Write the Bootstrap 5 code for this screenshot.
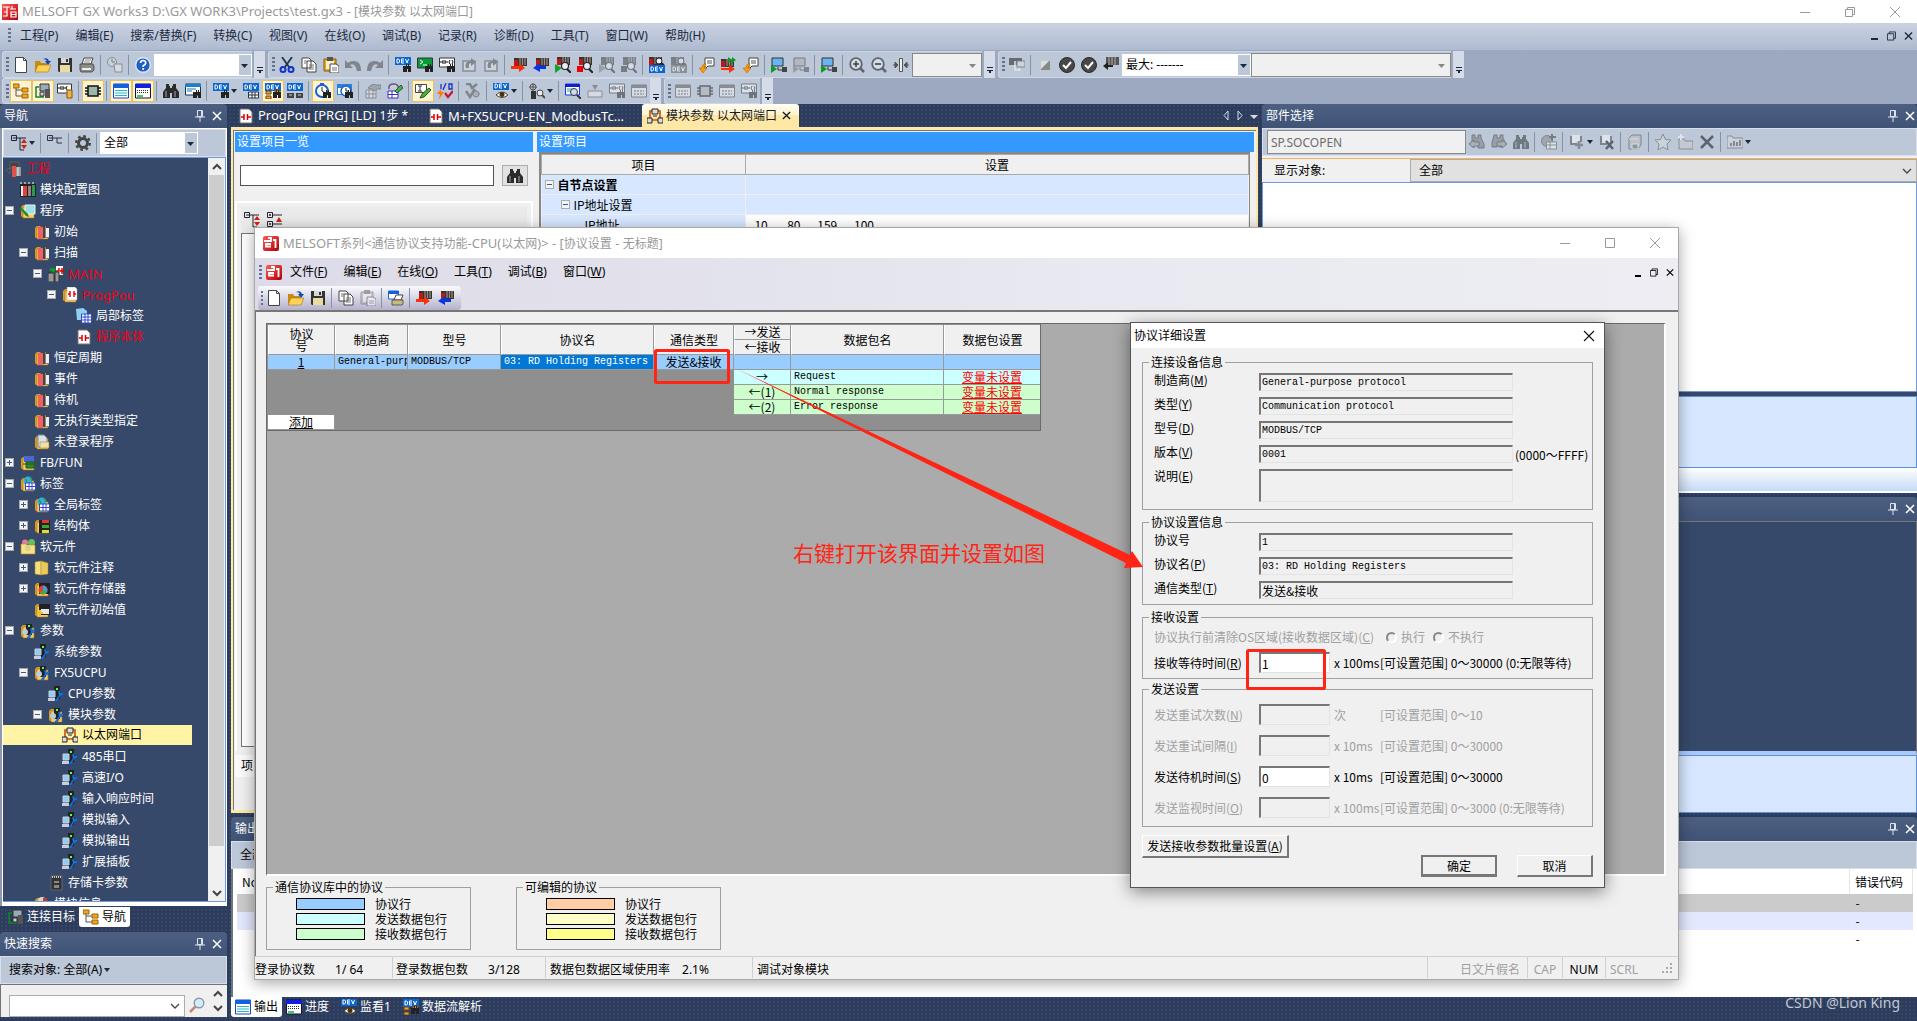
<!DOCTYPE html>
<html lang="zh-CN">
<head>
<meta charset="utf-8">
<meta name="viewport" content="width=device-width, initial-scale=1">
<title>MELSOFT GX Works3</title>
<link href="https://cdn.jsdelivr.net/npm/bootstrap@5.3.0/dist/css/bootstrap.min.css" rel="stylesheet">
<style>
:root{--ui:"Noto Sans","Noto Sans CJK SC",sans-serif;--sim:"Noto Sans CJK SC",sans-serif;--navy:#2c3c5a;--bar:#bcc7d8;--field:#36496a}
html,body{height:100%}
body{font:12px/16px var(--ui);color:#000;overflow:hidden;background:var(--navy);position:relative}
button,input,select,textarea{font:inherit;color:inherit;border-radius:0}
button{background:none;border:0;padding:0}
svg{display:block;flex:none}
.ic{width:16px;height:16px}
.latin{font-size:13px}
.mono{font-family:"Liberation Mono",monospace;font-size:10px}
.app{height:100%}
.shrinky{min-height:0;min-width:0}
.titlebar{height:23px;background:#fff;color:#999;padding:0 17px 0 2px}
.titlebar .ctl{gap:35px}
.menubar{height:28px;background:linear-gradient(#cad3e2,#aebad0);color:#1b293e;padding:0 4px 2px 4px;border-bottom:1px solid #9ca9c0}
.menubar nav{gap:17px;padding-left:9px}
.menubar nav button,.fmenu nav button{white-space:nowrap}
.grip{width:3px;height:15px;background:repeating-linear-gradient(#5f7290 0 2px,transparent 2px 4px)}
.bars{background:#9ca9c0;height:53px}
.barrow{height:27px;gap:3px;padding-left:2px}
.tgroup{height:27px;background:var(--bar);border:1px solid #cfd6e5;border-right:0;border-radius:3px 0 0 3px;padding-left:3px}
.tgroup .grip{margin-right:1px}
.low .tgroup{height:26px}
.tb{width:22px;height:22px;display:flex;align-items:center;justify-content:center;flex:none;border:1px solid transparent}
.tb.drop{width:30px}
.tb.sel{background:#fff3d4;border-color:#e5c365}
.tb.dis svg{filter:grayscale(1);opacity:.5}
.caret{width:0;height:0;border:3px solid transparent;border-top:4px solid #1b293e;border-bottom:0;margin-left:2px;flex:none}
.vsep{width:1px;height:20px;background:#8591a5;margin:0 3px 0 2px;flex:none}
.ovf{width:11px;height:27px;background:#d5dce8;display:flex;align-items:flex-end;justify-content:center;padding-bottom:5px;margin-left:2px}
.ovf i{width:6px;height:6px;border-top:1px solid #1b293e;background:linear-gradient(#1b293e,#1b293e) 2px 3px/2px 2px no-repeat,linear-gradient(#1b293e,#1b293e) 0 2px/6px 1px no-repeat}
.sel-box{appearance:none;height:22px;border:1px solid #fff;outline:0;padding:0 18px 0 3px;background:#fff url("data:image/svg+xml,%3Csvg xmlns='http://www.w3.org/2000/svg' width='12' height='20'%3E%3Cpath fill='%23bcc7d8' d='M0 0h12v20H0z'/%3E%3Cpath fill='%231b293e' d='M2 9h7l-3.500 4z'/%3E%3C/svg%3E") right 0 center no-repeat}
.sel-off{appearance:none;height:24px;border:1px solid #8a8a8a;outline:0;background:#f0f0f0 url("data:image/svg+xml,%3Csvg xmlns='http://www.w3.org/2000/svg' width='12' height='20'%3E%3Cpath fill='%23888' d='M1 9h7l-3.500 4z'/%3E%3C/svg%3E") right 1px center no-repeat}
.txt-off{height:24px;width:199px;border:1px solid #8a8a8a;outline:0;background:#f0f0f0;color:#6d6d6d;padding:0 3px}
.sel-flat{appearance:none;border:1px solid #adadad;outline:0;background:#e1e1e1 url("data:image/svg+xml,%3Csvg xmlns='http://www.w3.org/2000/svg' width='12' height='10'%3E%3Cpath fill='none' stroke='%23444' stroke-width='1.300' d='M2 3l4 4 4-4'/%3E%3C/svg%3E") right 3px center no-repeat}
.w98{width:98px}.w70{width:70px}.w130{width:129px}.w200{width:200px}
.dots{background:radial-gradient(#35476a 1px,transparent 1px) 0 0/4px 4px,var(--navy)}
.dock{gap:4px}
.leftcol{width:227px}
.rightcol{width:655px}
.phead{height:24px;background:linear-gradient(#4d6082,#3f5377);color:#fff;padding:0 5px 0 4px;border-radius:4px 4px 0 0;flex:none}
.phead.far{padding-right:2px}
.phead .tools{gap:7px}
.pbar{background:var(--bar);border:1px solid #d9dfea;height:28px;flex:none}
.nav-box{background:#fff;border-left:2px solid #8e99ad;padding:1px 1px 4px}
.tree{background:var(--field);color:#fff;border:1px solid #6f9bd4;border-right:0;border-left:0;min-height:0;overflow:hidden}
.tree li{height:21px;white-space:nowrap;padding-left:calc((var(--lv) - 1)*14px + 2px)}
.tree li.root{padding-left:3px}
.tree li .ic{margin-right:4px}
.tree li .box{margin-right:6px}
.tree li.hot{background:#fff3a5;color:#000;margin-right:16px;height:20px;margin-bottom:1px}
.tree li.red{color:#f00014}
.box{width:9px;height:9px;flex:none;border:1px solid #aaa;background:linear-gradient(#3b5998,#3b5998) 1px 3px/5px 1px no-repeat #f4f4f4}
.box.plus{background:linear-gradient(#3b5998,#3b5998) 1px 3px/5px 1px no-repeat,linear-gradient(#3b5998,#3b5998) 3px 1px/1px 5px no-repeat #f4f4f4}
.box.none{visibility:hidden}
.sbar{width:18px;background:#f0f0f0;border:1px solid #6f9bd4;border-left:0}
.sbar .thumb{background:#cdcdcd;margin:0 1px;flex:674}
.sbar .rest{flex:38}
.sbar span{height:17px;display:flex;align-items:center;justify-content:center}
.btab{height:20px;padding:0 4px;color:#fff;gap:3px;white-space:nowrap}
.btab.on{background:#fff;color:#000;border-radius:0 0 3px 3px}
.ltabs{padding:1px 0 5px}
.qsearch{background:#f0f0f0;height:33px}
.qsearch select{height:22px}
.doctabs{height:23px;color:#fff}
.doctab{height:23px;padding:0 4px 0 7px;gap:4px;white-space:nowrap}
.doctab.on{background:linear-gradient(#fffcf2 0,#fff3cd 50%,#ffe8a6 50%,#ffe8a6);color:#1b1b1b;border-radius:3px 3px 0 0;padding-left:5px;gap:3px}
.t1{width:190px}.t2{width:221px}.t3{width:157px}
.docframe{background:#f0f0f0;border:3px solid #ffe8a6;border-left-width:2px;border-right-width:2px;overflow:hidden;padding:2px 2px 0;box-shadow:inset 1px 1px #777;gap:4px}
.bluehead{background:#39f;color:#fff;height:20px;font-family:var(--sim);padding:1px 2px}
.listpane{width:298px}
.findrow{padding:13px 5px 15px}
.docframe .find{border:1px solid #555;height:21px;min-width:0}
.kbtn{width:26px;height:21px;border:1px solid #adadad;background:#e1e1e1}
.itemlist{border:2px solid #fff;border-bottom:0;padding:4px}
.itemlist .strip{height:26px;background:#eaeaea;padding-left:3px;gap:7px}
.itemname{background:#fafafa;height:22px;margin:4px 0 33px;padding:3px 6px}
.sheet{border-collapse:collapse;width:100%;font-family:var(--sim)}
.sheet th{font-weight:400;text-align:center;background:#f0f0f0;border:1px solid #aaa;height:20px;padding:0}
.sheet td{background:#d6e7ff;border-bottom:1px solid #f0f0f0;border-right:1px solid #f0f0f0;height:20px;padding:0 3px;line-height:16px}
.sheet .namecol{width:204px}
.sheet .addr{background:#fff;white-space:pre}
.sheetwrap{border:2px solid #888;border-right-width:1px;margin:0 4px 0 2px}
.light{background:#d6e7ff;border:1px solid #5c92dc}
.partbox{height:337px;background:#f0f0f0}
.partrow{border-top:1px solid #f7b25c;margin-top:2px}
.partrow label{width:144px}
.partrow select{height:23px}
.partlist{background:#fff;border:1px solid #6f9bd4}
.sash{height:4px;background:var(--field)}
.h72{height:72px}.h58{height:58px}
.glow{height:25px;background:linear-gradient(#fff,#c5daf7);border-bottom:2px solid #fff}
.helpbox{background:var(--field);border:1px solid #777;border-bottom:4px solid #a8c9fa}
.outdock{height:204px}
.outtab{width:100%;font-family:var(--sim)}
.outtab th{font-weight:400;height:25px;padding:0 5px;border-right:1px solid #e5e5e5}
.outtab td{height:18px;padding:0 6px}
.outtab .codecol{width:63px}
.outtab .r1{background:#cbcbcb}.outtab .r2{background:#e3e8ff}
.outtabs{height:24px}
/* floating protocol window */
.fwin{position:absolute;left:254px;top:227px;width:1425px;height:753px;background:#f0f0f0;border:1px solid #a8a8a8;box-shadow:0 3px 14px rgba(0,0,0,.35)}
.ftitle{height:30px;background:#fff;color:#999;padding:0 18px 0 8px}
.ftitle .ctl{gap:35px}
.fmenu{height:54px;background:linear-gradient(90deg,#dcdbe7,#e9e9f1 60%,#ededf3);border-bottom:2px solid #777}
.fmrow{height:28px}
.fmenu nav{gap:16px}
.fbar{background:linear-gradient(#fafafd,#b4b2cc);border-radius:3px;height:24px;padding:0 4px 0 3px;width:203px;margin-left:3px}
.fbody{border-left:1px solid #777;padding:11px 12px 6px 10px}
.canvas-area{background:#ababab;border:1px solid #6b6b6b;border-right:2px solid #fff;border-bottom:2px solid #fff}
.gridwrap{background:#8f8f8f;border:1px solid #6b6b6b;border-top:0;border-left:0;width:774px;padding:1px 0 0 1px}
.pgrid{border-collapse:separate;border-spacing:0;table-layout:fixed;width:772px;font-family:var(--sim);line-height:12px}
.pgrid th{font-weight:400;background:#f0f0f0;text-align:center;border-right:1px solid #999;border-bottom:1px solid #999;border-left:1px solid #fff;padding:0;height:15px}
.pgrid th.mid{border-right:1px solid #999!important}
.pgrid td{height:15px;padding:0 3px;border-right:1px solid #999;border-bottom:1px solid #999;white-space:nowrap;overflow:hidden;line-height:12px;vertical-align:middle}
.pgrid tr>*:last-child{border-right:0}
.pgrid .k1{width:67px}.pgrid .k2{width:73px}.pgrid .k3{width:93px}.pgrid .k4,.pgrid .k7{width:153px}.pgrid .k5{width:80px}.pgrid .k6{width:57px}
.pgrid .hb td{background:#9cf}.pgrid .hb .cur{background:#0078d7;color:#fff}
.pgrid .void{background:#8f8f8f!important;border-color:#8f8f8f}
.pgrid .cy{background:#cff}.pgrid .gr{background:#cfc}.pgrid .wh{background:#fff}
.pgrid a{color:red;text-decoration:underline}.pgrid a.k{color:#000}
.gbox{border:1px solid #a0a0a0;padding:0 11px;margin:0;font-family:var(--sim);line-height:12px;min-width:0}
.gbox legend{float:none;width:auto;font-size:12px;line-height:12px;margin:0 0 0 -5px;padding:0 2px}
.legends{gap:45px;padding-top:5px}
.lgd{width:205px;height:69px;padding-left:29px}
.lgd legend{margin:0 0 3px -23px}
.lgd div{height:15px;gap:10px}
.lgd i{width:69px;height:12px;border:1px solid #000}
.c1{background:#9cf}.c2{background:#cff}.c3{background:#cfc}.c4{background:#ffcea6}.c5{background:#ffffc8}.c6{background:#ffff8c}
.fstat{height:23px;border-top:1px solid #d0d0d0;white-space:nowrap}
.fstat span{border-right:1px solid #d0d0d0;height:21px;line-height:25px}
.s1{width:138px}.s2{width:153px;padding-left:3px}.s3{width:207px;padding-left:4px}.s4{padding-left:4px}
.fstat .kana{width:101px;text-align:right;padding-right:7px;border-left:1px solid #d0d0d0}.fstat .cap{width:35px;text-align:center}.fstat .num{width:43px;text-align:center}.fstat .scr{width:54px;border:0;padding-left:4px}
.off{color:#a0a0a0}
/* protocol detail dialog */
.dlg{position:absolute;left:1130px;top:322px;width:475px;height:566px;background:#f0f0f0;border:1px solid #555;box-shadow:0 4px 16px rgba(0,0,0,.45)}
.dtitle{height:25px;background:#fff;padding:0 9px 0 3px}
.dbody{padding:8px 11px;line-height:12px;font-family:var(--sim)}
.frow{height:24px}
.frow label,.prow>label{width:105px;line-height:24px;white-space:nowrap;flex:none}
.sunk{border:1px solid #e3e3e3;border-top:2px solid #777;border-left:2px solid #777;background:#f0f0f0;padding:0 1px;height:18px;outline:0;resize:none;flex:none}
.frow .sunk{width:254px;margin-top:5px}
.frow .after{padding:9px 0 0 2px;white-space:nowrap}
.frow.tall{height:38px}.frow.tall .sunk{height:33px}
.prow{height:31px;white-space:nowrap}
.prow.first{height:23px}
.radrow{height:28px}
.radrow span{width:228px}
.prow .sunk{width:71px;height:21px;margin-right:4px}
.prow .sunk:not(:disabled){background:#fff}
.prow .unit{width:46px}
.g2{margin-top:6px;padding-bottom:4px}.g1{padding-bottom:7px}.g3{margin-top:6px;padding-bottom:4px}.g4{margin-top:4px;padding-top:4px;padding-bottom:3px}
.rad{appearance:none;width:11px;height:11px;border-radius:50%;border:2px solid #888;border-right-color:#fff;border-bottom-color:#fff;background:#f0f0f0;margin:0}
.b3{border:1px solid #fff;border-right:2px solid #777;border-bottom:2px solid #777;background:#f0f0f0;font-family:var(--sim)}
.b3.def{border:2px solid #777;border-bottom-width:3px}
.bw{width:147px;height:23px}.bo{width:76px;height:22px}
.marks{position:absolute;left:0;top:0;width:1917px;height:1021px;pointer-events:none}
.note{position:absolute;left:793px;top:537px;font:21px/30px var(--sim);color:#ff2414;white-space:nowrap}
.wm{position:absolute;right:17px;bottom:10px;color:#c3c8d1;font-size:14px}
u{text-underline-offset:1px}
</style>
<script src="https://cdn.jsdelivr.net/npm/bootstrap@5.3.0/dist/js/bootstrap.bundle.min.js"></script>
</head>
<body>
<svg width="0" height="0" class="position-absolute" aria-hidden="true">
<defs>
<linearGradient id="gr" x2="1" y2="1"><stop stop-color="#ff5b55"/><stop offset="1" stop-color="#b0000c"/></linearGradient>
<g id="fold"><path d="M1 4l2-2h3l1 1v11H2l-1-1z" fill="#d99b22"/><path d="M3 4h4l1 1h6v10H3z" fill="#f6cf6b" stroke="#a87412" stroke-width=".6"/></g>
<g id="bino"><path d="M8 9h3V7h1v2h1V7h1v2h2v6h-3v-3h-1v3H8z" fill="#222"/></g>
<g id="devt"><path d="M0 0h16v8H0z" fill="#0a66d0"/><path d="M2 2v4h1.500l1-1V3l-1-1zM9 2H6.500v4H9M6.500 4H9M10.500 2l1.500 4L13.500 2" fill="none" stroke="#fff"/></g>
<g id="wrench"><path d="M7 15l4-6-1-3 2-2v3h2l2-2-1 4-3 1-3 6z" fill="#1e78d8" stroke="#0a3f86" stroke-width=".5"/></g>
<g id="plc"><path d="M3 1h13v8H3z" fill="#3a3430"/><path d="M3 3h4v6H3z" fill="#c01818"/><path d="M9 1v7M11.500 1v7M14 1v7" stroke="#9a8f84" stroke-width="1.200"/></g>
</defs>
<symbol id="gx" viewBox="0 0 16 16"><path d="M0 0h16v16H0z" fill="url(#gr)"/><path d="M1 3h7M5 3v9M2 8h3v4H1M8 5h6M10 2v3M9 8h5v5H9zM9 10.500h5" stroke="#fff" fill="none" stroke-width="1.200"/></symbol>
<symbol id="melapp" viewBox="0 0 16 16"><rect y="1" width="16" height="15" rx="2" fill="url(#gr)"/><path d="M1 6h7V3H5M8 9H3v2.500h5M10 5h2.500v8" stroke="#fff" fill="none" stroke-width="1.800"/></symbol>
<symbol id="new" viewBox="0 0 16 16"><path d="M2.500.5h8l3 3v12h-11z" fill="#fff" stroke="#444"/><path d="M10.500.5v3h3" fill="none" stroke="#444"/></symbol>
<symbol id="open" viewBox="0 0 16 16"><path d="M0 4h5l1 2h6v9H0z" fill="#c98a12"/><path d="M3 8h13l-3 7H0z" fill="#ffd257" stroke="#a87412" stroke-width=".6"/><path d="M8 2q5-2 6 2h2l-3 4-3-4h2q-1-2-4-2z" fill="#1546b5"/></symbol>
<symbol id="save" viewBox="0 0 16 16"><path d="M1 1h14v14H2l-1-1z" fill="#333"/><path d="M4 1h8v5H4z" fill="#d8d8d8"/><path d="M9 2h2v3H9z" fill="#333"/><path d="M3 8h10v7H3z" fill="#e9dca0"/></symbol>
<symbol id="print" viewBox="0 0 16 16"><path d="M5 1h9l-2 6H3z" fill="#fff" stroke="#444"/><path d="M1 7h13l1 2v4l-2 2H2l-1-2z" fill="#8d8d88" stroke="#333" stroke-width=".7"/><path d="M3 11h9v2H3z" fill="#eee"/><path d="M6 3h6M5 5h6" stroke="#888"/></symbol>
<symbol id="winprint" viewBox="0 0 16 16"><path d="M.5 1h10v8H.5z" fill="#fff" stroke="#26c"/><path d="M0 1h11v3H0z" fill="#1560e0"/><path d="M8 5h7l-2 5H6z" fill="#fff" stroke="#444"/><path d="M4 10h11v4l-1 1H4z" fill="#c8b980" stroke="#333" stroke-width=".7"/></symbol>
<symbol id="clockwin" viewBox="0 0 16 16"><circle cx="5" cy="5" r="4.500" fill="#ddd" stroke="#555"/><path d="M5 2v3h3" stroke="#333" fill="none"/><path d="M7 7h8v8H8z" fill="#eee" stroke="#555"/></symbol>
<symbol id="help" viewBox="0 0 16 16"><circle cx="8" cy="8" r="7.300" fill="#1d5fc4" stroke="#dbe6f5" stroke-width="1.400"/><path d="M5.500 6q0-2.500 2.600-2.500T10.700 6q0 1.500-2.500 2.700V10" fill="none" stroke="#fff" stroke-width="1.700"/><path d="M7.300 11h1.800v1.800H7.300z" fill="#fff"/></symbol>
<symbol id="cut" viewBox="0 0 16 16"><path d="M3 0l7 10M13 0L6 10" stroke="#234" stroke-width="1.800"/><circle cx="4" cy="12.500" r="2.500" fill="none" stroke="#1034c8" stroke-width="2"/><circle cx="12" cy="12.500" r="2.500" fill="none" stroke="#1034c8" stroke-width="2"/></symbol>
<symbol id="copy" viewBox="0 0 16 16"><path d="M1 1h7l2 2v8H1zM6 4h6l3 3v8H6z" fill="#fff" stroke="#444"/><path d="M8 8h5M8 10h5M8 12h5M3 4h3M3 6h2" stroke="#777"/></symbol>
<symbol id="paste" viewBox="0 0 16 16"><path d="M1 2h12v12H1z" fill="#e6a92c" stroke="#8b5b08"/><path d="M4 0h6v4H4z" fill="#555"/><path d="M3 4h8v8H3z" fill="#fff2c8"/><path d="M7 7h6l3 2v7H7z" fill="#fff" stroke="#444"/><path d="M9 11h5M9 13h5" stroke="#777"/></symbol>
<symbol id="undo" viewBox="0 0 16 16"><path d="M0 3v8h8L5 8q5-3 7 6h4Q16 3 8 4 5 4 3 6z" fill="#444"/></symbol>
<symbol id="redo" viewBox="0 0 16 16"><path d="M16 3v8H8l3-3q-5-3-7 6H0Q0 3 8 4q3 0 5 2z" fill="#444"/></symbol>
<symbol id="devfind" viewBox="0 0 16 16"><use href="#devt"/><use href="#bino"/></symbol>
<symbol id="grnfind" viewBox="0 0 16 16"><path d="M.5 1h15v10H.5z" fill="#0a9a3a" stroke="#333"/><path d="M3 3l3 2-3 2M6 8h4" stroke="#fff" fill="none"/><use href="#bino"/></symbol>
<symbol id="ladfind" viewBox="0 0 16 16"><path d="M.5 1h15v9H.5z" fill="#fff" stroke="#333"/><path d="M1 5h3M4 3v4M6 3v4M6 5h3M11 3q-2 2 0 4M13 3q2 2 0 4" stroke="#111" fill="none"/><use href="#bino"/></symbol>
<symbol id="jump" viewBox="0 0 16 16"><path d="M2 4h12v10H2z" fill="#ddd" stroke="#555" stroke-width="1.500"/><path d="M5 11q-2-7 5-7V1l5 4-5 4V6Q7 6 8 11z" fill="#444"/></symbol>
<symbol id="wplc" viewBox="0 0 16 16"><use href="#plc"/><path d="M0 9h8V6l6 5-6 4v-3H0z" fill="#f5330a"/></symbol>
<symbol id="rplc" viewBox="0 0 16 16"><use href="#plc"/><path d="M13 9H7V6l-7 5 7 4v-3h6z" fill="#0834e8"/></symbol>
<symbol id="mon" viewBox="0 0 16 16"><use href="#plc" x="-1" y="-1"/><path d="M0 7l7 4-7 5z" fill="#0aa52a"/><circle cx="10" cy="9" r="3.500" fill="#e6eef8" stroke="#222" stroke-width="1.200"/><path d="M12 12l4 4" stroke="#222" stroke-width="2"/></symbol>
<symbol id="monstop" viewBox="0 0 16 16"><use href="#plc" x="-1" y="-1"/><path d="M0 9h6v6H0z" fill="#e00"/><circle cx="10" cy="9" r="3.500" fill="#e6eef8" stroke="#222" stroke-width="1.200"/><path d="M12 12l4 4" stroke="#222" stroke-width="2"/></symbol>
<symbol id="devmon" viewBox="0 0 16 16"><use href="#plc" x="-3" y="-1"/><circle cx="10" cy="4" r="3" fill="#eef" stroke="#222"/><path d="M12 6l3 2" stroke="#222" stroke-width="2"/><use href="#devt" y="8"/></symbol>
<symbol id="cmt" viewBox="0 0 16 16"><path d="M6 1h9v8H9l-3 3z" fill="#fff" stroke="#444"/><path d="M8 4h5M8 6h5" stroke="#555"/><path d="M6 6v1q-3 0-3 4H0l4 5 4-5H5q0-2 2-2z" fill="#f99a0a" stroke="#b35c00" stroke-width=".5"/></symbol>
<symbol id="wchg" viewBox="0 0 16 16"><use href="#plc" x="-3" y="1"/><path d="M0 11h8V8l6 4-6 4v-3H0z" fill="#f5330a"/><path d="M7 0l4 3-4 3zM11 0l4 3-4 3z" fill="#0a9a1a"/></symbol>
<symbol id="pcmon" viewBox="0 0 16 16"><path d="M1 1h11v8H1z" fill="#68b5f0" stroke="#333"/><path d="M0 8l6 4-6 4z" fill="#0a9a2a"/><path d="M11 10h5v5h-5z" fill="#444"/><path d="M7 10v3h4" stroke="#333" fill="none"/></symbol>
<symbol id="zin" viewBox="0 0 16 16"><circle cx="7" cy="7" r="5.800" fill="#d5dbe4" stroke="#5d6570" stroke-width="1.800"/><path d="M4 7h6M7 4v6" stroke="#444" stroke-width="1.600"/><path d="M11 11l4 4" stroke="#5d6570" stroke-width="2.500"/></symbol>
<symbol id="zout" viewBox="0 0 16 16"><circle cx="7" cy="7" r="5.800" fill="#d5dbe4" stroke="#5d6570" stroke-width="1.800"/><path d="M4 7h6" stroke="#444" stroke-width="1.600"/><path d="M11 11l4 4" stroke="#5d6570" stroke-width="2.500"/></symbol>
<symbol id="zfit" viewBox="0 0 16 16"><path d="M6.500 1.500h3v13h-3z" fill="#eee" stroke="#555"/><path d="M0 8h4M2 5l3 3-3 3zM16 8h-4M14 5l-3 3 3 3z" stroke="#555" fill="#555"/></symbol>
<symbol id="conn" viewBox="0 0 16 16"><path d="M0 1h13v7H0z" fill="#111"/><path d="M8 4h8v6H8z" fill="#ddd" stroke="#444"/><path d="M6 4v9h6M10 11v3" stroke="#fff" stroke-width="1.500" fill="none"/></symbol>
<symbol id="stop" viewBox="0 0 16 16"><path d="M4 4h9v9H4z" fill="#888"/><path d="M4 4h8l-8 8z" fill="#ddd"/></symbol>
<symbol id="chk" viewBox="0 0 16 16"><circle cx="8" cy="8" r="7.500" fill="#484848" stroke="#2a2a2a"/><path d="M4 8l3 3 5-6" stroke="#fff" stroke-width="2" fill="none"/></symbol>
<symbol id="backplc" viewBox="0 0 16 16"><path d="M3 0h13v8H3z" fill="#555"/><path d="M6 0v8M9 0v8M12 0v8" stroke="#b5ada4"/><path d="M10 8H5V5L0 9l5 4v-3h5z" fill="#222"/></symbol>
<symbol id="nav" viewBox="0 0 16 16"><path d="M3 5v8h7M3 7h7" stroke="#555" fill="none"/><path d="M0 1h6v4H0zM9 5h6v4H9zM9 11h6v4H9z" fill="#f0a51c" stroke="#9a6405"/></symbol>
<symbol id="target" viewBox="0 0 16 16"><path d="M5 1h9v7H5z" fill="#9ab" stroke="#333"/><path d="M10 6h5v9h-5z" fill="#555"/><path d="M4 4H1v10h8" stroke="#0a8a2a" fill="none" stroke-width="1.500"/><path d="M5 9h4v4H5z" fill="#ccc" stroke="#333"/></symbol>
<symbol id="ladbook" viewBox="0 0 16 16"><path d="M.5 1h14v9H.5z" fill="#fff" stroke="#333"/><path d="M1 5h3M4 3v4M6 3v4M6 5h3M10 3q-2 2 0 4" stroke="#111" fill="none"/><path d="M10 7h5v8h-5z" fill="#f0b050" stroke="#8a5500"/></symbol>
<symbol id="chip" viewBox="0 0 16 16"><path d="M3 3h10v10H3z" fill="#9db5a8" stroke="#111" stroke-width="1.500"/><path d="M0 5h3M0 8h3M0 11h3M13 5h3M13 8h3M13 11h3" stroke="#111" stroke-width="1.500"/></symbol>
<symbol id="listw" viewBox="0 0 16 16"><path d="M.5 1h15v14H.5z" fill="#fff" stroke="#1348c8"/><path d="M0 1h16v4H0z" fill="#1060e0"/><path d="M2 7.500h12M2 10h12M2 12.500h12" stroke="#27b6c8"/></symbol>
<symbol id="dotw" viewBox="0 0 16 16"><path d="M.5 1h15v14H.5z" fill="#fff" stroke="#113"/><path d="M0 1h16v4H0z" fill="#1020e0"/><path d="M2 7.500h12M2 9.500h12" stroke="#333" stroke-dasharray="1 1"/><path d="M2 13h6" stroke="#0b3" stroke-width="1.500"/></symbol>
<symbol id="binoc" viewBox="0 0 16 16"><path d="M3 1h3v2h1v2h2V3h1V1h3v4l3 4v6H9v-5H7v5H0V9l3-4z" fill="#2b2b2b"/><path d="M3 8v6M12 8v6" stroke="#aaa"/></symbol>
<symbol id="listfind" viewBox="0 0 16 16"><path d="M.5 1h15v11H.5z" fill="#fff" stroke="#135"/><path d="M0 1h16v3H0z" fill="#1380d0"/><path d="M2 6h9M2 8h5" stroke="#27a"/><use href="#bino"/></symbol>
<symbol id="devlist" viewBox="0 0 16 16"><use href="#devt"/><path d="M5.500 9h10v6h-10zM5 12h10M9 9v6M12 9v6" fill="#fff" stroke="#234"/></symbol>
<symbol id="devflow" viewBox="0 0 16 16"><use href="#devt"/><path d="M1 8h5v3H1zM1 13h5v3H1zM10 7h5v3h-5z" fill="#f0a51c" stroke="#642"/><use href="#bino"/></symbol>
<symbol id="devnet" viewBox="0 0 16 16"><use href="#devt"/><path d="M0 10h7v5H0zM9 10h7v5H9z" fill="#444"/><path d="M2 12h3M11 12h3M3 9h10" stroke="#ccc"/></symbol>
<symbol id="clockfind" viewBox="0 0 16 16"><circle cx="7" cy="8" r="6" fill="#fff" stroke="#1765c8" stroke-width="2"/><path d="M5 0h4v2H5z" fill="#1765c8"/><path d="M7 4v4l3 2" stroke="#223" fill="none"/><use href="#bino"/></symbol>
<symbol id="clocklist" viewBox="0 0 16 16"><path d="M0 1h15v11H0z" fill="#2a7fd6"/><path d="M1 5h5v6H1z" fill="#fff"/><circle cx="9" cy="8" r="5" fill="#fff" stroke="#1765c8" stroke-width="1.500"/><path d="M9 5v3h3" stroke="#223" fill="none"/><use href="#bino"/></symbol>
<symbol id="handtab" viewBox="0 0 16 16"><path d="M1 7h10v8H1zM1 11h10M4 7v8M8 7v8" fill="#eee" stroke="#555"/><path d="M3 5q4-5 8-3h5v4h-4l-3 2-2-2z" fill="#888" stroke="#444"/></symbol>
<symbol id="tabpen" viewBox="0 0 16 16"><path d="M1 8h10v7H1zM1 11.500h10M5 8v7" fill="#fff" stroke="#4030c0"/><path d="M2 6q-1-5 5-5 5 0 4 5" fill="#ccc" stroke="#65508f" stroke-width="1.500"/><path d="M8 8l6-6 2 3-6 5z" fill="#4eb52a" stroke="#255"/></symbol>
<symbol id="editpen" viewBox="0 0 16 16"><path d="M.5 1.500h11v8H.5z" fill="#fff" stroke="#444"/><path d="M3 3h4M5 3v5M3 8h4" stroke="#333"/><path d="M5 15l2-4 7-6 2 2-7 7z" fill="#4eb52a" stroke="#253"/></symbol>
<symbol id="iochk" viewBox="0 0 16 16"><path d="M4 1v5M6 7l3-7M12 1h3v5h-3z" stroke="#1530c8" fill="none" stroke-width="1.300"/><path d="M4 6l-4 5h3l-1 5 5-7H4z" fill="#f70"/><path d="M8 10l3 4 5-6" stroke="#d01030" fill="none" stroke-width="2.200"/></symbol>
<symbol id="devdis" viewBox="0 0 16 16"><path d="M1 1h4l2 4 5-4M1 8l4 6 4-7 5 5" fill="none" stroke="#444" stroke-width="2.500"/><circle cx="11" cy="11" r="3" fill="#999" stroke="#444"/></symbol>
<symbol id="deveye" viewBox="0 0 16 16"><use href="#devt" y="-1"/><path d="M3 12q6-6 12 0-6 5-12 0z" fill="#fff" stroke="#542"/><circle cx="9" cy="11.500" r="2.500" fill="#431"/></symbol>
<symbol id="scope" viewBox="0 0 16 16"><path d="M4 0v8M0 4h8" stroke="#555"/><circle cx="4" cy="4" r="3" fill="none" stroke="#555"/><path d="M2 8h5v8H2z" fill="#333"/><circle cx="11" cy="10" r="3" fill="#e5edf5" stroke="#444"/><path d="M13 12l3 3" stroke="#642" stroke-width="2"/></symbol>
<symbol id="winmag" viewBox="0 0 16 16"><path d="M.5 1h14v11H.5z" fill="#fff" stroke="#13f"/><path d="M0 1h15v3H0z" fill="#1020c8"/><path d="M2 6h7M2 8h5" stroke="#2a9"/><circle cx="9" cy="9" r="3.500" fill="#cde" stroke="#333"/><path d="M12 12l4 4" stroke="#333" stroke-width="2"/></symbol>
<symbol id="gbar" viewBox="0 0 16 16"><path d="M1 8h14v6H1z" fill="#eee" stroke="#555"/><path d="M5 2h6L8 7z" fill="#555"/></symbol>
<symbol id="gcyl" viewBox="0 0 16 16"><path d="M2 4l3-3h9v10l-3 4H2z" fill="#bbb" stroke="#444"/><path d="M2 5h9M5 10h6v5H5z" fill="#666" stroke="#eee"/></symbol>
<symbol id="gwin" viewBox="0 0 16 16"><path d="M.5 2h15v12H.5z" fill="#eee" stroke="#444"/><path d="M0 2h16v3H0z" fill="#555"/><path d="M3 8h10M3 11h10" stroke="#333" stroke-dasharray="2 1"/></symbol>
<symbol id="tplmin" viewBox="0 0 16 16"><path d="M.5.5h5v5h-5zM2 3h3M6 3h9M9 3v12h4" fill="none" stroke="#223"/><path d="M10 8l3-4 3 4zM10 10h6l-3 4z" fill="#d02010"/></symbol>
<symbol id="tplplus" viewBox="0 0 16 16"><path d="M.5.5h5v5h-5zM.5 9.500h5v5h-5zM2 3h2M3 2v2M2 12h2M3 11v2M6 3h9M6 12h9" fill="none" stroke="#223"/><path d="M9 10l3-5 3 5z" fill="#d02010"/></symbol>
<symbol id="tmini" viewBox="0 0 16 16"><path d="M.5.5h5v5h-5zM2 3h3M6 3h9M10 3v5h5" fill="none" stroke="#334"/></symbol>
<symbol id="gear" viewBox="0 0 16 16"><circle cx="8" cy="8" r="4.500" fill="none" stroke="#444" stroke-width="3"/><circle cx="8" cy="8" r="6.800" fill="none" stroke="#444" stroke-width="2.400" stroke-dasharray="2.700 2.640"/></symbol>
<symbol id="pinic" viewBox="0 0 10 12"><path d="M2.500.5h5v6h-5zM0 7h10M5 7v5M6.500 1v6" stroke="#dde3ee" fill="none"/></symbol>
<symbol id="xic" viewBox="0 0 10 10"><path d="M1 1l8 8M9 1L1 9" stroke="currentColor" stroke-width="1.500"/></symbol>
<symbol id="xthin" viewBox="0 0 10 10"><path d="M0 0l10 10M10 0L0 10" stroke="currentColor"/></symbol>
<symbol id="minic" viewBox="0 0 10 10"><path d="M0 5.500h10" stroke="currentColor"/></symbol>
<symbol id="resic" viewBox="0 0 10 10"><path d="M.5 2.500h7v7h-7zM2.500 2.500v-2h7v7h-2" stroke="currentColor" fill="none"/></symbol>
<symbol id="maxic" viewBox="0 0 10 10"><path d="M.5.5h9v9h-9z" stroke="currentColor" fill="none"/></symbol>
<symbol id="mag" viewBox="0 0 16 16"><circle cx="10" cy="6" r="4.800" fill="#d5ebfa" stroke="#89a" stroke-width="1.400"/><path d="M6.500 9.500L1 15" stroke="#c08a78" stroke-width="2.500"/></symbol>
<symbol id="doc" viewBox="0 0 16 16"><path d="M2 1h9l3 3v11H2z" fill="#fff" stroke="#777"/><path d="M3 9h3M6 6v6M9.500 6v6M10 9h3" stroke="#d00" stroke-width="1.500"/></symbol>
<symbol id="proj" viewBox="0 0 16 16"><path d="M4 1h9v6H4zM0 9l4-2v6z" fill="#444" stroke="#777" stroke-width=".5"/><path d="M6 5h4v11H6z" fill="#e05050"/><path d="M10 6h5v9h-5z" fill="#999"/><path d="M12 6v9" stroke="#eee"/></symbol>
<symbol id="modcfg" viewBox="0 0 16 16"><path d="M0 2h16v13H0z" fill="#222"/><path d="M1 4h4v10H1z" fill="#eee"/><path d="M3 4h4v10H3z" fill="#e04040"/><path d="M8 4h3v10H8z" fill="#888"/><path d="M12 3h3v11h-3z" fill="#289a50"/><path d="M0 1h16" stroke="#fff" stroke-dasharray="2 2"/></symbol>
<symbol id="fprog" viewBox="0 0 16 16"><use href="#fold"/><path d="M5 2h10v9H5z" fill="#9fe0e8" stroke="#eee"/><path d="M1 4l7 7 1 3-3-1-6-7z" fill="#2a8a2a"/></symbol>
<symbol id="fplc" viewBox="0 0 16 16"><use href="#fold"/><path d="M4 3h5v12H4z" fill="#f26060"/><path d="M9 2h6v12H9z" fill="#888"/><path d="M12 4h3v9h-3z" fill="#eee"/><path d="M9 1h2v13H9zM12 1h3v3h-3z" fill="#444"/></symbol>
<symbol id="pmain" viewBox="0 0 16 16"><path d="M8 0h7v9H8z" fill="#fff"/><path d="M8 5h3V2M14 2v6M12 5h4" stroke="#d00" stroke-width="1.500" fill="none"/><path d="M0 7h6v9H0zM7 6h4v10H7z" fill="#999" stroke="#333"/><path d="M1 4q2-4 7-1L6 7z" fill="#0a9a2a"/></symbol>
<symbol id="fdoc" viewBox="0 0 16 16"><use href="#fold"/><path d="M5 0h8l2 2v11H5z" fill="#fff" stroke="#999" stroke-width=".5"/><path d="M6 7h2V4v6M12 4v6M12 7h2" stroke="#d00" stroke-width="1.400" fill="none"/></symbol>
<symbol id="llabel" viewBox="0 0 16 16"><path d="M0 1l7-1 4 3v9H1z" fill="#8fd2f0"/><path d="M5.500 6h10v9h-10zM5 9h10M5 12h10M9 6v9M12 6v9" fill="#fff" stroke="#3448c8"/></symbol>
<symbol id="fdocs" viewBox="0 0 16 16"><use href="#fold"/><path d="M4 1h6l3 3v9H4z" fill="#d5e3ea" stroke="#889"/><path d="M6 8h9v6H6z" fill="#f0dfa8" stroke="#a87412" stroke-width=".5"/></symbol>
<symbol id="ffb" viewBox="0 0 16 16"><use href="#fold"/><path d="M4 1h10v6H4z" fill="#4868d8"/><path d="M6 7h8v6H6zM3 9h12" fill="#2f8a2f" stroke="#1b5a1b"/></symbol>
<symbol id="flabel" viewBox="0 0 16 16"><use href="#fold"/><circle cx="8" cy="5" r="4.500" fill="#35b0d8"/><path d="M5 2q4 3 1 5zM9 1q4 2 3 5z" fill="#2c9a3c"/><path d="M5.500 7h10v7h-10zM5 10.500h10M9 7v7M12 7v7" fill="#fff" stroke="#3448c8"/></symbol>
<symbol id="fstruct" viewBox="0 0 16 16"><use href="#fold"/><path d="M5 2h11v13H5z" fill="#222"/><path d="M8 2h7v3H8z" fill="#e33"/><path d="M8 7h7v3H8z" fill="#3a3"/><path d="M8 12h7v3H8z" fill="#dd3"/></symbol>
<symbol id="fdev" viewBox="0 0 16 16"><circle cx="5" cy="3.500" r="3" fill="#e87a9a"/><circle cx="11.500" cy="3.500" r="3.500" fill="#63c05c"/><path d="M1 5h5l1 1h8v9H1z" fill="#f8df8a" stroke="#b98a22" stroke-width=".6"/><circle cx="8" cy="9" r="3" fill="#d5d58a"/></symbol>
<symbol id="fcmt" viewBox="0 0 16 16"><path d="M1 2l6-1v14l-6-1z" fill="#f5dd80" stroke="#b98a22" stroke-width=".5"/><path d="M7 1l7 2v11l-7 1z" fill="#e9c85c" stroke="#b98a22" stroke-width=".5"/></symbol>
<symbol id="fmem" viewBox="0 0 16 16"><use href="#fold"/><path d="M5 2h11v11H5z" fill="#222"/><circle cx="9" cy="9" r="4.500" fill="#e84030"/><path d="M9 9V4.500A4.500 4.500 0 0 1 13 11z" fill="#38a0e8"/><path d="M9 9l4 2a4.500 4.500 0 0 1-7 1z" fill="#3ab040"/></symbol>
<symbol id="finit" viewBox="0 0 16 16"><use href="#fold"/><path d="M5 2h11v11H5z" fill="#222"/><path d="M7 7h8v5H7z" fill="#e6e6e6"/><path d="M6 8v7M3 11h6" stroke="#f0c020" stroke-width="2"/></symbol>
<symbol id="fparam" viewBox="0 0 16 16"><use href="#fold"/><path d="M6 1h6v11H6z" fill="#222"/><path d="M8 2h2v2H8z" fill="#5f5"/><circle cx="5" cy="9" r="3" fill="#bcd"/><use href="#wrench"/></symbol>
<symbol id="param" viewBox="0 0 16 16"><path d="M6 0h6v13H6z" fill="#222"/><path d="M8 2h2v2H8z" fill="#5f5"/><path d="M1 5h6v6H1z" fill="#8fd0f0" stroke="#ccd"/><path d="M0 12h7v3H0z" fill="#ccd"/><use href="#wrench"/></symbol>
<symbol id="ether" viewBox="0 0 16 16"><path d="M5 3H3v8M11 3h2v8M4 12h8" stroke="#c85a10" fill="none" stroke-width="1.700"/><path d="M5 1h6v5H5zM0 10h5v5H0zM11 10h5v5h-5z" fill="#ddd" stroke="#222"/><path d="M6 8h4" stroke="#222"/></symbol>
<symbol id="sd" viewBox="0 0 16 16"><path d="M3 1h11v14H3z" fill="#333" stroke="#888" stroke-width=".5"/><path d="M4 2h9" stroke="#ccc" stroke-dasharray="1 1" stroke-width="2"/><path d="M6 6h5v2H6zM6 10h5v3H6z" fill="#888"/></symbol>
<symbol id="finfo" viewBox="0 0 16 16"><use href="#fold"/><circle cx="8" cy="5" r="4" fill="#d5d5d5"/><path d="M9 2h4v5H9z" fill="#c33"/></symbol>
<symbol id="binl" viewBox="0 0 16 16"><path d="M3 1h3v3h3V1h3v3l3 6v4H9V8H8L3 13z" fill="#777" stroke="#333"/><path d="M0 10l5-4v2h5v4H5v2z" fill="#999" stroke="#333"/></symbol>
<symbol id="binr" viewBox="0 0 16 16"><path d="M3 1h3v3h3V1h3v3l3 6-5 3H8V8L6 13H1V9z" fill="#777" stroke="#333"/><path d="M16 10l-5-4v2H6v4h5v2z" fill="#999" stroke="#333"/></symbol>
<symbol id="globtab" viewBox="0 0 16 16"><circle cx="6" cy="7" r="5.500" fill="#888" stroke="#444"/><path d="M11 0v6M8 3h7" stroke="#333" stroke-width="2"/><path d="M5.500 8h10v7h-10zM5 11h10M9 8v7" fill="#fff" stroke="#555"/></symbol>
<symbol id="boxplus" viewBox="0 0 16 16"><path d="M2 2v8h6M12 8V2" fill="#fff" stroke="#444" stroke-width="2"/><path d="M3 1h8v7H3z" fill="#fff"/><path d="M10 7v8M6 11h8" stroke="#555" stroke-width="2.500"/></symbol>
<symbol id="boxx" viewBox="0 0 16 16"><path d="M2 2v8h6M12 8V2" fill="#fff" stroke="#444" stroke-width="2"/><path d="M3 1h8v7H3z" fill="#fff"/><path d="M7 7l7 8M14 7l-7 8" stroke="#000" stroke-width="2.500"/></symbol>
<symbol id="starg" viewBox="0 0 16 16"><path d="M8 0l2.500 5.500L16 6l-4 4 1 6-5-3-5 3 1-6-4-4 5.500-.5z" fill="#ddd" stroke="#555"/></symbol>
<symbol id="newfold" viewBox="0 0 16 16"><path d="M2 5h5l1 2h8v8H2z" fill="#ccc" stroke="#555"/><path d="M4 0v6M1 3h6" stroke="#fff" stroke-width="2"/></symbol>
<symbol id="xbig" viewBox="0 0 16 16"><path d="M2 2l12 12M14 2L2 14" stroke="#000" stroke-width="2.500"/></symbol>
<symbol id="foldbar" viewBox="0 0 16 16"><path d="M0 2h5l1 2h10v10H0z" fill="#ddd" stroke="#555"/><path d="M4 12V9M7 12V7M10 12V8M13 12V6" stroke="#333" stroke-width="1.700"/></symbol>
</svg>

<div class="app d-flex flex-column">
  <header class="titlebar d-flex align-items-center flex-shrink-0">
    <svg class="ic me-1"><use href="#gx"/></svg>
    <span class="flex-grow-1 text-nowrap"><span class="latin">MELSOFT GX Works3 D:\GX WORK3\Projects\test.gx3 - </span>[模块参数 以太网端口]</span>
    <span class="ctl d-flex"><button aria-label="最小化"><svg width="10" height="10"><use href="#minic"/></svg></button><button aria-label="还原"><svg width="10" height="10"><use href="#resic"/></svg></button><button aria-label="关闭"><svg width="10" height="10"><use href="#xthin"/></svg></button></span>
  </header>
  <div class="menubar d-flex align-items-center flex-shrink-0">
    <span class="grip ms-1"></span>
    <nav class="d-flex flex-grow-1"><button>工程(P)</button><button>编辑(E)</button><button>搜索/替换(F)</button><button>转换(C)</button><button>视图(V)</button><button>在线(O)</button><button>调试(B)</button><button>记录(R)</button><button>诊断(D)</button><button>工具(T)</button><button>窗口(W)</button><button>帮助(H)</button></nav>
    <span class="d-flex gap-2"><svg width="9" height="10"><path d="M1 8h7" stroke="currentColor" stroke-width="2"/></svg><svg width="9" height="10"><use href="#resic"/></svg><svg width="9" height="10"><use href="#xic"/></svg></span>
  </div>
  <div class="bars flex-shrink-0">
    <div class="barrow d-flex">
      <div class="d-flex"><div class="tgroup d-flex align-items-center" data-tools="new open save print | -clockwin | help"><select class="sel-box w98" aria-label="帮助搜索"><option></option></select></div><span class="ovf"><i></i></span></div>
      <div class="d-flex"><div class="tgroup d-flex align-items-center" data-tools="cut copy paste -undo -redo | devfind grnfind ladfind -jump -jump | wplc rplc mon monstop -mon -monstop | devmon -devmon | cmt wchg cmt | pcmon -pcmon | pcmon | zin zout zfit"><select class="sel-off w70" aria-label="缩放"><option></option></select></div><span class="ovf"><i></i></span></div>
      <div class="d-flex"><div class="tgroup d-flex align-items-center" data-tools="-conn | stop chk chk backplc"><select class="sel-box w130" aria-label="最大"><option>最大: -------</option></select><select class="sel-off w200" aria-label="目标"><option></option></select></div><span class="ovf"><i></i></span></div>
    </div>
    <div class="barrow low d-flex">
      <div class="d-flex"><div class="tgroup d-flex align-items-center" data-tools="*nav *target ladbook | *chip | *listw *dotw | binoc listfind | devfind^ devlist *devflow devnet | *clockfind clocklist | -handtab tabpen | *editpen iochk | -devdis | deveye^ | scope^ | winmag -gbar -ladfind -gwin"></div><span class="ovf ms-0"><i></i></span></div>
      <div class="d-flex"><div class="tgroup d-flex align-items-center" data-tools="-gwin -chip -gwin -ladfind"></div><span class="ovf"><i></i></span></div>
    </div>
  </div>

  <div class="dock dots d-flex flex-grow-1 shrinky">
    <aside class="leftcol d-flex flex-column flex-shrink-0">
      <div class="phead d-flex align-items-center justify-content-between"><span>导航</span><span class="tools d-flex"><svg width="10" height="12"><use href="#pinic"/></svg><svg width="10" height="12"><use href="#xic"/></svg></span></div>
      <div class="nav-box d-flex flex-column flex-grow-1 shrinky">
        <div class="pbar d-flex align-items-center ps-1" data-tools="tplmin^ | tmini | gear |"><select class="sel-box w98" aria-label="显示"><option>全部</option></select></div>
        <div class="d-flex flex-grow-1 shrinky">
          <ul id="tree" class="tree list-unstyled mb-0 flex-grow-1"></ul>
          <div class="sbar d-flex flex-column flex-shrink-0"><span><svg width="10" height="8"><path d="M1 6l4-4 4 4" fill="none" stroke="#444" stroke-width="2"/></svg></span><div class="thumb"></div><div class="rest"></div><span><svg width="10" height="8"><path d="M1 2l4 4 4-4" fill="none" stroke="#444" stroke-width="2"/></svg></span></div>
        </div>
      </div>
      <div class="ltabs d-flex"><button class="btab d-flex align-items-center ps-2"><svg class="ic"><use href="#target"/></svg>连接目标</button><button class="btab on d-flex align-items-center"><svg class="ic"><use href="#nav"/></svg>导航</button></div>
      <div class="phead d-flex align-items-center justify-content-between"><span>快速搜索</span><span class="tools d-flex"><svg width="10" height="12"><use href="#pinic"/></svg><svg width="10" height="12"><use href="#xic"/></svg></span></div>
      <div class="pbar d-flex align-items-center ps-2"><button class="d-flex align-items-center">搜索对象: 全部(A)<span class="caret"></span></button></div>
      <div class="qsearch d-flex align-items-end border-top border-start border-secondary mb-1 ps-2 flex-shrink-0"><select class="sel-flat bg-white flex-grow-1" aria-label="搜索内容"><option></option></select><button class="ms-1 me-2 mb-1" aria-label="搜索"><svg class="ic"><use href="#mag"/></svg></button><span class="me-1 mb-1"><svg width="10" height="24"><path d="M1 7l4-4 4 4M1 17l4 4 4-4" fill="none" stroke="#444" stroke-width="2"/></svg></span></div>
    </aside>

    <div class="d-flex flex-column flex-grow-1 shrinky">
      <div class="d-flex flex-grow-1 gap-1 shrinky">
        <main class="d-flex flex-column flex-grow-1 shrinky">
          <div class="doctabs d-flex align-items-center flex-shrink-0">
            <div class="doctab t1 d-flex align-items-center"><svg class="ic"><use href="#doc"/></svg><span><span class="latin">ProgPou [PRG] [LD] </span>1步 *</span></div>
            <div class="doctab t2 d-flex align-items-center"><svg class="ic"><use href="#doc"/></svg><span class="latin">M+FX5UCPU-EN_ModbusTc...</span></div>
            <div class="doctab on t3 d-flex align-items-center"><svg class="ic"><use href="#ether"/></svg><span class="flex-grow-1">模块参数 以太网端口</span><svg width="9" height="9" class="me-1"><use href="#xic"/></svg></div>
            <svg class="ms-auto" width="36" height="12"><path d="M6 1v9L2 5.500zM16 1v9l4-4.500z" fill="none" stroke="#d5dce8"/><path d="M28 5h8l-4 4z" fill="#d5dce8"/></svg>
          </div>
          <div class="docframe d-flex flex-grow-1 shrinky">
            <div class="listpane d-flex flex-column flex-shrink-0">
              <div class="bluehead">设置项目一览</div>
              <div class="findrow d-flex"><input class="find flex-grow-1" aria-label="查找"><button class="kbtn d-flex align-items-center justify-content-center ms-2" aria-label="查找"><svg class="ic"><use href="#binoc"/></svg></button></div>
              <div class="itemlist flex-grow-1 d-flex flex-column"><div class="strip d-flex align-items-center"><svg class="ic"><use href="#tplmin"/></svg><svg class="ic"><use href="#tplplus"/></svg></div><div class="flex-grow-1 bg-white border border-secondary"></div></div>
              <div class="itemname">项目一览</div>
            </div>
            <div class="flex-grow-1">
              <div class="bluehead">设置项目</div>
              <div class="sheetwrap">
                <table class="sheet"><thead><tr><th class="namecol">项目</th><th>设置</th></tr></thead><tbody>
                <tr><td><span class="d-flex align-items-center gap-1 fw-bold"><i class="box"></i>自节点设置</span></td><td></td></tr>
                <tr><td><span class="d-flex align-items-center gap-1 ps-3"><i class="box"></i>IP地址设置</span></td><td></td></tr>
                <tr><td><span class="d-block ps-4 ms-3">IP地址</span></td><td class="addr">  10  .    80  .   159  .   100</td></tr></tbody></table>
              </div>
            </div>
          </div>
        </main>
        <aside class="rightcol d-flex flex-column flex-shrink-0">
          <div class="phead far d-flex align-items-center justify-content-between"><span>部件选择</span><span class="tools d-flex"><svg width="10" height="12"><use href="#pinic"/></svg><svg width="10" height="12"><use href="#xic"/></svg></span></div>
          <div class="pbar d-flex align-items-center ps-1"><input class="txt-off" aria-label="部件" value="SP.SOCOPEN"><div class="d-flex align-items-center" data-tools="-binl -binr -binoc | -globtab | -boxplus^ -boxx | -gcyl | -starg -newfold -xbig | -foldbar^"></div></div>
          <div class="partbox d-flex flex-column flex-shrink-0">
            <div class="partrow d-flex align-items-center"><label for="part" class="ps-2 ms-1">显示对象:</label><select id="part" class="sel-flat flex-grow-1 ps-2"><option>全部</option></select></div>
            <div class="partlist flex-grow-1"></div>
            <div class="sash"></div>
            <div class="light h72"></div>
            <div class="glow"></div>
          </div>
          <div class="phead far d-flex align-items-center justify-content-between mt-1"><span></span><span class="tools d-flex"><svg width="10" height="12"><use href="#pinic"/></svg><svg width="10" height="12"><use href="#xic"/></svg></span></div>
          <div class="helpbox flex-grow-1"></div>
          <div class="light h58"></div>
        </aside>
      </div>
      <section class="outdock d-flex flex-column flex-shrink-0 mt-1">
        <div class="phead far d-flex align-items-center justify-content-between"><span>输出</span><span class="tools d-flex"><svg width="10" height="12"><use href="#pinic"/></svg><svg width="10" height="12"><use href="#xic"/></svg></span></div>
        <div class="pbar d-flex align-items-center ps-2">全部</div>
        <div class="bg-white flex-grow-1 border-start border-2 border-secondary ps-1 pe-1">
          <table class="outtab"><thead><tr><th>No.</th><th class="codecol">错误代码</th></tr></thead><tbody><tr class="r1"><td></td><td>-</td></tr><tr class="r2"><td></td><td>-</td></tr><tr><td></td><td>-</td></tr></tbody></table>
        </div>
        <div class="outtabs d-flex flex-shrink-0"><button class="btab on d-flex align-items-center"><svg class="ic"><use href="#listw"/></svg>输出</button><button class="btab d-flex align-items-center"><svg class="ic"><use href="#dotw"/></svg>进度</button><button class="btab d-flex align-items-center ps-2"><svg class="ic"><use href="#deveye"/></svg>监看1</button><button class="btab d-flex align-items-center ps-2"><svg class="ic"><use href="#devflow"/></svg>数据流解析</button></div>
      </section>
    </div>
  </div>
</div>

<section class="fwin d-flex flex-column">
  <div class="ftitle d-flex align-items-center flex-shrink-0"><svg class="ic me-1"><use href="#melapp"/></svg><span class="flex-grow-1"><span class="latin">MELSOFT</span>系列<span class="latin">&lt;</span>通信协议支持功能<span class="latin">-CPU(</span>以太网<span class="latin">)&gt; - [</span>协议设置<span class="latin"> - </span>无标题]</span>
    <span class="ctl d-flex"><button aria-label="最小化"><svg width="10" height="10"><use href="#minic"/></svg></button><button aria-label="最大化"><svg width="10" height="10"><use href="#maxic"/></svg></button><button aria-label="关闭"><svg width="10" height="10"><use href="#xthin"/></svg></button></span></div>
  <div class="fmenu flex-shrink-0">
    <div class="fmrow d-flex align-items-center ps-1 pe-1"><span class="grip"></span><svg class="ic me-2 ms-1"><use href="#melapp"/></svg>
      <nav class="d-flex flex-grow-1"><button>文件(<u>F</u>)</button><button>编辑(<u>E</u>)</button><button>在线(<u>O</u>)</button><button>工具(<u>T</u>)</button><button>调试(<u>B</u>)</button><button>窗口(<u>W</u>)</button></nav>
      <span class="d-flex gap-2"><svg width="8" height="9"><path d="M1 8h6" stroke="#000" stroke-width="2"/></svg><svg width="8" height="9"><use href="#resic"/></svg><svg width="8" height="9"><use href="#xic"/></svg></span></div>
    <div class="fbar d-flex align-items-center" data-tools="new open save | copy -paste | winprint | wplc rplc"></div>
  </div>
  <div class="fbody d-flex flex-column flex-grow-1 shrinky">
    <div class="canvas-area flex-grow-1">
      <div class="gridwrap">
        <table class="pgrid">
          <colgroup><col class="k1"><col class="k2"><col class="k3"><col class="k4"><col class="k5"><col class="k6"><col class="k7"><col></colgroup>
          <thead><tr><th rowspan="2">协议<br>号</th><th rowspan="2">制造商</th><th rowspan="2">型号</th><th rowspan="2">协议名</th><th rowspan="2">通信类型</th><th>→发送</th><th rowspan="2">数据包名</th><th rowspan="2">数据包设置</th></tr><tr><th class="mid">←接收</th></tr></thead>
          <tbody>
            <tr class="hb"><td class="text-center"><a href="#" class="k">1</a></td><td class="mono">General-purpose</td><td class="mono">MODBUS/TCP</td><td class="mono cur">03: RD Holding Registers</td><td class="text-center">发送&amp;接收</td><td></td><td></td><td></td></tr>
            <tr><td class="void" colspan="5"></td><td class="cy text-center">→</td><td class="cy mono">Request</td><td class="cy text-center"><a href="#">变量未设置</a></td></tr>
            <tr><td class="void" colspan="5"></td><td class="gr text-center">←(1)</td><td class="gr mono">Normal response</td><td class="gr text-center"><a href="#">变量未设置</a></td></tr>
            <tr><td class="void" colspan="5"></td><td class="gr text-center">←(2)</td><td class="gr mono">Error response</td><td class="gr text-center"><a href="#">变量未设置</a></td></tr>
            <tr><td class="wh text-center"><a href="#" class="k">添加</a></td><td class="void" colspan="7"></td></tr>
          </tbody>
        </table>
      </div>
    </div>
    <div class="legends d-flex">
      <fieldset class="gbox lgd"><legend>通信协议库中的协议</legend><div class="d-flex align-items-center"><i class="c1"></i>协议行</div><div class="d-flex align-items-center"><i class="c2"></i>发送数据包行</div><div class="d-flex align-items-center"><i class="c3"></i>接收数据包行</div></fieldset>
      <fieldset class="gbox lgd"><legend>可编辑的协议</legend><div class="d-flex align-items-center"><i class="c4"></i>协议行</div><div class="d-flex align-items-center"><i class="c5"></i>发送数据包行</div><div class="d-flex align-items-center"><i class="c6"></i>接收数据包行</div></fieldset>
    </div>
  </div>
  <div class="fstat d-flex flex-shrink-0"><span class="s1">登录协议数<b class="fw-normal ms-3 ps-1">1/ 64</b></span><span class="s2">登录数据包数<b class="fw-normal ms-3 ps-1">3/128</b></span><span class="s3">数据包数据区域使用率<b class="fw-normal ms-2 ps-1">2.1%</b></span><span class="s4 flex-grow-1 border-0">调试对象模块</span><span class="off kana">日文片假名</span><span class="off cap">CAP</span><span class="num">NUM</span><span class="off scr">SCRL</span><svg width="14" height="18" class="me-1"><path d="M10 15h2M6 15h2M2 15h2M10 11h2M6 11h2M10 7h2" stroke="#aaa" stroke-width="2"/></svg></div>
</section>

<section class="dlg" role="dialog" aria-label="协议详细设置">
  <div class="dtitle d-flex align-items-center justify-content-between">协议详细设置<button aria-label="关闭"><svg width="12" height="12" viewBox="0 0 12 12"><path d="M1 1l10 10M11 1L1 11" stroke="#111" stroke-width="1.100"/></svg></button></div>
  <div class="dbody">
    <fieldset class="gbox g1"><legend>连接设备信息</legend>
      <div class="frow d-flex align-items-start"><label for="f1">制造商(<u>M</u>)</label><input id="f1" class="sunk mono" readonly value="General-purpose protocol"></div>
      <div class="frow d-flex align-items-start"><label for="f2">类型(<u>Y</u>)</label><input id="f2" class="sunk mono" readonly value="Communication protocol"></div>
      <div class="frow d-flex align-items-start"><label for="f3">型号(<u>D</u>)</label><input id="f3" class="sunk mono" readonly value="MODBUS/TCP"></div>
      <div class="frow d-flex align-items-start"><label for="f4">版本(<u>V</u>)</label><input id="f4" class="sunk mono" readonly value="0001"><span class="after">(0000～FFFF)</span></div>
      <div class="frow tall d-flex align-items-start"><label for="f5">说明(<u>E</u>)</label><textarea id="f5" class="sunk" readonly></textarea></div>
    </fieldset>
    <fieldset class="gbox g2"><legend>协议设置信息</legend>
      <div class="frow d-flex align-items-start"><label for="f6">协议号</label><input id="f6" class="sunk mono" readonly value="1"></div>
      <div class="frow d-flex align-items-start"><label for="f7">协议名(<u>P</u>)</label><input id="f7" class="sunk mono" readonly value="03: RD Holding Registers"></div>
      <div class="frow d-flex align-items-start"><label for="f8">通信类型(<u>T</u>)</label><input id="f8" class="sunk" readonly value="发送&amp;接收"></div>
    </fieldset>
    <fieldset class="gbox g3"><legend>接收设置</legend>
      <div class="radrow d-flex align-items-center off"><span>协议执行前清除OS区域(接收数据区域)(<u>C</u>)</span><input type="radio" class="rad mx-1" id="r1" name="clr" disabled><label for="r1" class="me-2">执行</label><input type="radio" class="rad me-1" id="r2" name="clr" disabled><label for="r2">不执行</label></div>
      <div class="prow first d-flex align-items-center"><label for="p0">接收等待时间(<u>R</u>)</label><input id="p0" class="sunk" value="1"><span class="unit">x 100ms</span>[可设置范围] 0～30000 (0:无限等待)</div>
    </fieldset>
    <fieldset class="gbox g4"><legend>发送设置</legend>
      <div class="prow d-flex align-items-center off"><label for="p1">发送重试次数(<u>N</u>)</label><input id="p1" class="sunk" disabled><span class="unit">次</span>[可设置范围] 0～10</div>
      <div class="prow d-flex align-items-center off"><label for="p2">发送重试间隔(<u>I</u>)</label><input id="p2" class="sunk" disabled><span class="unit">x 10ms</span>[可设置范围] 0～30000</div>
      <div class="prow d-flex align-items-center"><label for="p3">发送待机时间(<u>S</u>)</label><input id="p3" class="sunk" value="0"><span class="unit">x 10ms</span>[可设置范围] 0～30000</div>
      <div class="prow d-flex align-items-center off"><label for="p4">发送监视时间(<u>O</u>)</label><input id="p4" class="sunk" disabled><span class="unit">x 100ms</span>[可设置范围] 0～3000 (0:无限等待)</div>
    </fieldset>
    <div class="d-flex mt-1 pt-1"><button class="b3 bw text-nowrap">发送接收参数批量设置(<u>A</u>)</button><div class="d-flex ms-auto mt-3 pt-1"><button class="b3 def bo me-3">确定</button><button class="b3 bo ms-1">取消</button></div></div>
  </div>
</section>

<svg class="marks" viewBox="0 0 1917 1021"><g fill="none" stroke="#ff2414" stroke-width="3"><rect x="655.500" y="350.500" width="73" height="32" rx="1"/><rect x="1247.500" y="650.500" width="77" height="38" rx="1"/></g><path d="M737 369L1130 555l2-4 11 16-19 1 2-5z" fill="#ff2414"/></svg>
<div class="note">右键打开该界面并设置如图</div>
<div class="wm">CSDN @Lion King</div>

<script>
// Toolbars: "|" separator, "*" pressed, "-" disabled, "^" with a drop-down arrow
document.querySelectorAll('[data-tools]').forEach(function (bar) {
  var html = bar.classList.contains('tgroup') || bar.classList.contains('fbar') ? '<span class="grip"></span>' : '';
  bar.dataset.tools.split(' ').forEach(function (t) {
    if (t === '|') { html += '<span class="vsep"></span>'; return; }
    var name = t.replace(/[*^-]/g, ''), c = 'tb';
    if (t[0] === '*') c += ' sel';
    if (t[0] === '-') c += ' dis';
    var drop = t.slice(-1) === '^';
    if (drop) c += ' drop';
    html += '<button class="' + c + '" aria-label="' + name + '"><svg class="ic"><use href="#' + name + '"/></svg>' + (drop ? '<span class="caret"></span>' : '') + '</button>';
  });
  bar.insertAdjacentHTML('afterbegin', html);
});
// Project tree: level, expander (- + or blank), icon, text, class
var rows = [[0,'','proj','工程','root red'],[1,'','modcfg','模块配置图'],[1,'-','fprog','程序'],[2,'','fplc','初始'],[2,'-','fplc','扫描'],[3,'-','pmain','MAIN','red latin'],[4,'-','fdoc','ProgPou','red latin'],[5,'','llabel','局部标签'],[5,'','doc','程序本体','red'],[2,'','fplc','恒定周期'],[2,'','fplc','事件'],[2,'','fplc','待机'],[2,'','fplc','无执行类型指定'],[2,'','fdocs','未登录程序'],[1,'+','ffb','FB/FUN'],[1,'-','flabel','标签'],[2,'+','flabel','全局标签'],[2,'+','fstruct','结构体'],[1,'-','fdev','软元件'],[2,'+','fcmt','软元件注释'],[2,'+','fmem','软元件存储器'],[2,'','finit','软元件初始值'],[1,'-','fparam','参数'],[2,'','param','系统参数'],[2,'-','fparam','FX5UCPU'],[3,'','param','CPU参数'],[3,'-','fparam','模块参数'],[4,'','ether','以太网端口','hot'],[4,'','param','485串口'],[4,'','param','高速I/O'],[4,'','param','输入响应时间'],[4,'','param','模拟输入'],[4,'','param','模拟输出'],[4,'','param','扩展插板'],[3,'','sd','存储卡参数'],[2,'','finfo','模块信息']];
document.getElementById('tree').innerHTML = rows.map(function (r) {
  var box = r[0] ? '<i class="box ' + (r[1] === '+' ? 'plus' : r[1] ? '' : 'none') + '"></i>' : '';
  return '<li class="d-flex align-items-center ' + (r[4] || '') + '" style="--lv:' + r[0] + '">' + box + '<svg class="ic"><use href="#' + r[2] + '"/></svg>' + r[3] + '</li>';
}).join('');
</script>
</body>
</html>
